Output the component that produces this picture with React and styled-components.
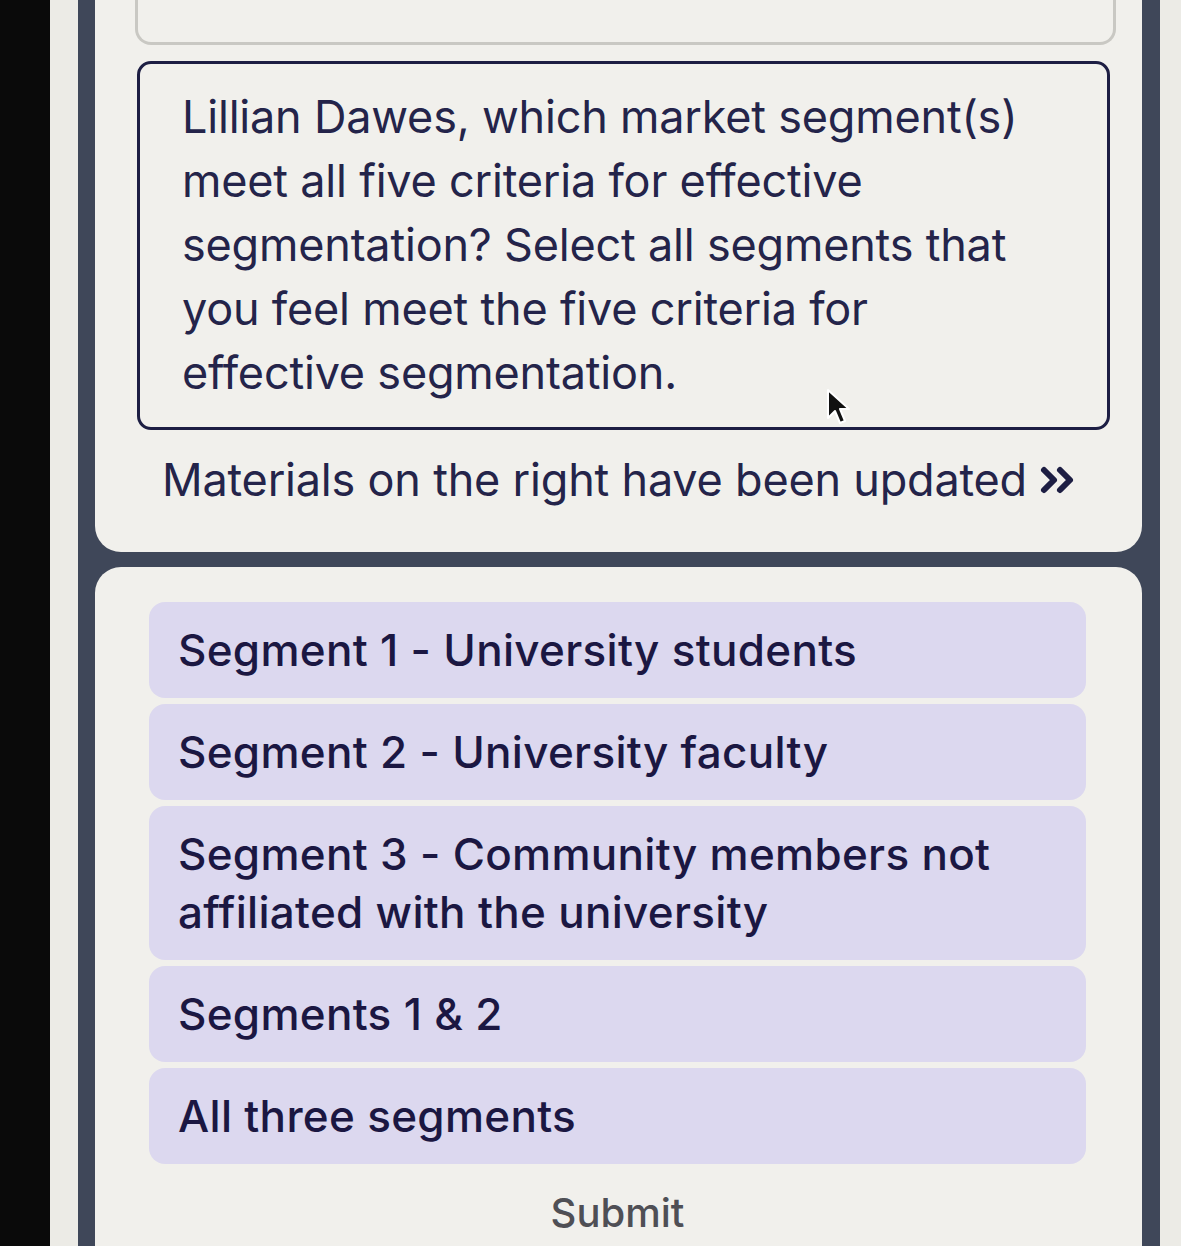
import React from "react";
import styled, { createGlobalStyle } from "styled-components";

const Global = createGlobalStyle`
  html, body { margin: 0; padding: 0; background: #0b0b0b; }
  body { font-family: "Inter", "Open Sans", "Liberation Sans", sans-serif; }
  * { box-sizing: border-box; }
`;

const Screen = styled.div`
  display: flex;
  width: 1181px;
  height: 1246px;
  overflow: hidden;
  position: relative;
`;

const Bezel = styled.div`
  width: 50px;
  flex: none;
  background: #0a0a0a;
`;

const Strip = styled.div`
  width: ${(p) => p.$w}px;
  flex: none;
  background: #ecebe6;
`;

const Frame = styled.div`
  flex: 1;
  background: #3f4759;
  padding: 0 18px 0 17px;
  display: flex;
  flex-direction: column;
  gap: 15px;
`;

const Card = styled.section`
  background: #f1f0ec;
  border-radius: ${(p) => (p.$top ? "0 0 26px 26px" : "26px 26px 0 0")};
  padding: ${(p) => p.$pad};
  display: flex;
  flex-direction: column;
  flex: ${(p) => (p.$grow ? 1 : "none")};
`;

const PrevBox = styled.div`
  height: 45px;
  margin: 0 26px 0 40px;
  border: 3px solid #c9c8c3;
  border-top: none;
  border-radius: 0 0 16px 16px;
`;

const Question = styled.div`
  margin: 16px 32px 0 42px;
  border: 3px solid #1d1e43;
  border-radius: 14px;
  padding: 21px 60px 22px 42px;
  font-size: 45px;
  line-height: 64px;
  color: #24244a;
  letter-spacing: -0.2px;
`;

const Notice = styled.div`
  display: flex;
  align-items: center;
  gap: 12px;
  margin: 18px 0 0 67px;
  font-size: 45px;
  line-height: 64px;
  color: #24244a;
  letter-spacing: -0.2px;
`;

const Options = styled.div`
  display: flex;
  flex-direction: column;
  gap: 6px;
`;

const Option = styled.button`
  all: unset;
  display: block;
  background: #dcd8ef;
  border-radius: 16px;
  padding: 19px 30px 19px 29px;
  font-family: "Inter", "Open Sans", "Liberation Sans", sans-serif;
  font-size: 44px;
  font-weight: 500;
  line-height: 58px;
  color: #1b1742;
  letter-spacing: 0.3px;
  cursor: pointer;
`;

const Submit = styled.div`
  text-align: center;
  margin-top: 24px;
  font-size: 40px;
  font-weight: 500;
  color: #4f4f55;
`;

const Cursor = styled.svg`
  position: absolute;
  left: 826px;
  top: 388px;
`;

const options = [
  "Segment 1 - University students",
  "Segment 2 - University faculty",
  "Segment 3 - Community members not affiliated with the university",
  "Segments 1 & 2",
  "All three segments",
];

export default function App() {
  return (
    <>
      <Global />
      <Screen>
        <Bezel />
        <Strip $w={28} />
        <Frame>
          <Card $top $pad="0 0 40px 0">
            <PrevBox />
            <Question>
              Lillian Dawes, which market segment(s) meet all five criteria for
              effective segmentation? Select all segments that you feel meet the
              five criteria for effective segmentation.
            </Question>
            <Notice>
              Materials on the right have been updated
              <svg width="38" height="32" viewBox="0 0 38 32" aria-hidden="true">
                <path d="M5 6 L15 16 L5 26" fill="none" stroke="#1d1e43" strokeWidth="6" strokeLinecap="round" strokeLinejoin="round" />
                <path d="M21 6 L31 16 L21 26" fill="none" stroke="#1d1e43" strokeWidth="6" strokeLinecap="round" strokeLinejoin="round" />
              </svg>
            </Notice>
          </Card>
          <Card $grow $pad="35px 56px 0 54px">
            <Options>
              {options.map((o) => (
                <Option key={o}>{o}</Option>
              ))}
            </Options>
            <Submit>Submit</Submit>
          </Card>
        </Frame>
        <Strip $w={21} />
        <Cursor width="26" height="40" viewBox="0 0 26 40" aria-hidden="true">
          <path d="M2 2 L2 30 L9 23 L14 35 L19 33 L14 21 L23 21 Z" fill="#111" stroke="#fff" strokeWidth="2" strokeLinejoin="round" />
        </Cursor>
      </Screen>
    </>
  );
}
